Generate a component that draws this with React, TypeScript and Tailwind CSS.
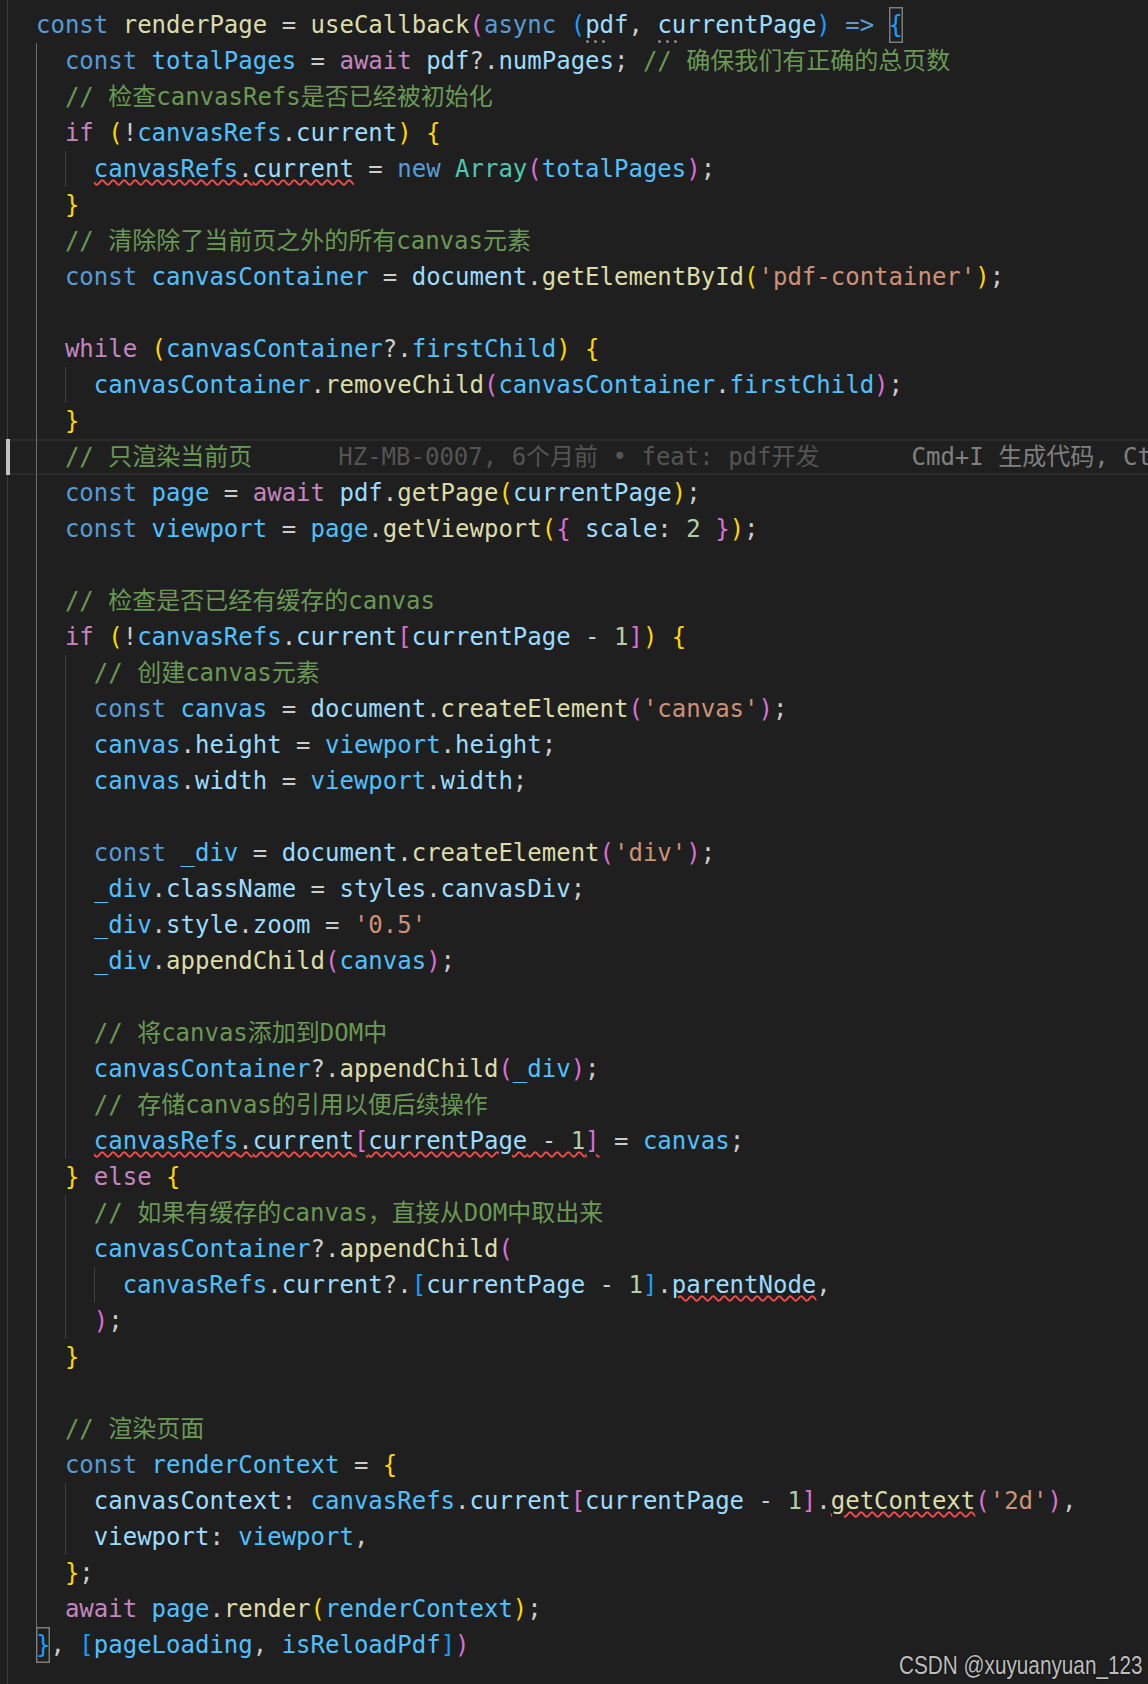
import clsx from "clsx";

type Line = { g: number; s: string; blame?: boolean };

// one letter per token colour, flags: ~ squiggle, . hint dots, # bracket box
const colors: Record<string, string> = {
  k: "text-[#569cd6]",
  c: "text-[#c586c0]",
  f: "text-[#dcdcaa]",
  v: "text-[#9cdcfe]",
  C: "text-[#4fc1ff]",
  t: "text-[#4ec9b0]",
  s: "text-[#ce9178]",
  n: "text-[#b5cea8]",
  m: "text-[#6a9955]",
  p: "text-[#cccccc]",
  y: "text-[#ffd700]",
  o: "text-[#da70d6]",
  e: "text-[#179fff]",
};

const lines: Line[] = [
  { g: 0, s: "k:const|p: |f:renderPage|p: = |f:useCallback|o:(|k:async|p: |e:(|v.:pdf|p:, |v.:currentPage|e:)|p: |k:=>|p: |e#:{" },
  { g: 1, s: "k:const|p: |C:totalPages|p: = |c:await|p: |v:pdf|p:?.|v:numPages|p:; |m:// 确保我们有正确的总页数" },
  { g: 1, s: "m:// 检查canvasRefs是否已经被初始化" },
  { g: 1, s: "c:if|p: |y:(|p:!|C:canvasRefs|p:.|v:current|y:)|p: |y:{" },
  { g: 2, s: "C~:canvasRefs|p~:.|v~:current|p: = |k:new|p: |t:Array|o:(|C:totalPages|o:)|p:;" },
  { g: 1, s: "y:}" },
  { g: 1, s: "m:// 清除除了当前页之外的所有canvas元素" },
  { g: 1, s: "k:const|p: |C:canvasContainer|p: = |v:document|p:.|f:getElementById|y:(|s:'pdf-container'|y:)|p:;" },
  { g: 1, s: "" },
  { g: 1, s: "c:while|p: |y:(|C:canvasContainer|p:?.|C:firstChild|y:)|p: |y:{" },
  { g: 2, s: "C:canvasContainer|p:.|f:removeChild|o:(|C:canvasContainer|p:.|C:firstChild|o:)|p:;" },
  { g: 1, s: "y:}" },
  { g: 1, s: "m:// 只渲染当前页", blame: true },
  { g: 1, s: "k:const|p: |C:page|p: = |c:await|p: |v:pdf|p:.|f:getPage|y:(|v:currentPage|y:)|p:;" },
  { g: 1, s: "k:const|p: |C:viewport|p: = |C:page|p:.|f:getViewport|y:(|o:{|p: |v:scale|p:: |n:2|p: |o:}|y:)|p:;" },
  { g: 1, s: "" },
  { g: 1, s: "m:// 检查是否已经有缓存的canvas" },
  { g: 1, s: "c:if|p: |y:(|p:!|C:canvasRefs|p:.|v:current|o:[|v:currentPage|p: - |n:1|o:]|y:)|p: |y:{" },
  { g: 2, s: "m:// 创建canvas元素" },
  { g: 2, s: "k:const|p: |C:canvas|p: = |v:document|p:.|f:createElement|o:(|s:'canvas'|o:)|p:;" },
  { g: 2, s: "C:canvas|p:.|v:height|p: = |C:viewport|p:.|v:height|p:;" },
  { g: 2, s: "C:canvas|p:.|v:width|p: = |C:viewport|p:.|v:width|p:;" },
  { g: 2, s: "" },
  { g: 2, s: "k:const|p: |C:_div|p: = |v:document|p:.|f:createElement|o:(|s:'div'|o:)|p:;" },
  { g: 2, s: "C:_div|p:.|v:className|p: = |v:styles|p:.|v:canvasDiv|p:;" },
  { g: 2, s: "C:_div|p:.|v:style|p:.|v:zoom|p: = |s:'0.5'" },
  { g: 2, s: "C:_div|p:.|f:appendChild|o:(|C:canvas|o:)|p:;" },
  { g: 2, s: "" },
  { g: 2, s: "m:// 将canvas添加到DOM中" },
  { g: 2, s: "C:canvasContainer|p:?.|f:appendChild|o:(|C:_div|o:)|p:;" },
  { g: 2, s: "m:// 存储canvas的引用以便后续操作" },
  { g: 2, s: "C~:canvasRefs|p~:.|v~:current|o~:[|v~:currentPage|p~: - |n~:1|o~:]|p: = |C:canvas|p:;" },
  { g: 1, s: "y:}|p: |c:else|p: |y:{" },
  { g: 2, s: "m:// 如果有缓存的canvas，直接从DOM中取出来" },
  { g: 2, s: "C:canvasContainer|p:?.|f:appendChild|o:(" },
  { g: 3, s: "C:canvasRefs|p:.|v:current|p:?.|e:[|v:currentPage|p: - |n:1|e:]|p:.|v~:parentNode|p:," },
  { g: 2, s: "o:)|p:;" },
  { g: 1, s: "y:}" },
  { g: 1, s: "" },
  { g: 1, s: "m:// 渲染页面" },
  { g: 1, s: "k:const|p: |C:renderContext|p: = |y:{" },
  { g: 2, s: "v:canvasContext|p:: |C:canvasRefs|p:.|v:current|o:[|v:currentPage|p: - |n:1|o:]|p:.|f~:getContext|o:(|s:'2d'|o:)|p:," },
  { g: 2, s: "v:viewport|p:: |C:viewport|p:," },
  { g: 1, s: "y:}|p:;" },
  { g: 1, s: "c:await|p: |C:page|p:.|f:render|y:(|C:renderContext|y:)|p:;" },
  { g: 0, s: "e#:}|p:, |e:[|C:pageLoading|p:, |C:isReloadPdf|e:]|o:)" },
];

const Token = ({ seg }: { seg: string }) => {
  const i = seg.indexOf(":");
  const head = seg.slice(0, i);
  const text = seg.slice(i + 1);
  const squiggle = head.includes("~");
  const dots = head.includes(".");
  const box = head.includes("#");

  return (
    <span
      className={clsx(
        colors[head[0]],
        squiggle &&
          "underline decoration-wavy decoration-[#f14c4c] decoration-[2px] underline-offset-[2px]",
        dots && "relative",
        box && "inline-block h-[36px] align-top shadow-[inset_0_0_0_1.5px_#7c7c7c]"
      )}
    >
      {text}
      {dots && (
        <span className="absolute left-[1px] top-[29px] flex gap-[5px]">
          <span className="h-[3px] w-[3px] rounded-full bg-[#8c8c8c]" />
          <span className="h-[3px] w-[3px] rounded-full bg-[#8c8c8c]" />
          <span className="h-[3px] w-[3px] rounded-full bg-[#8c8c8c]" />
        </span>
      )}
    </span>
  );
};

const CodeLine = ({ line }: { line: Line }) => {
  return (
    <div
      className={clsx(
        "relative flex h-[36px] pl-[28px] leading-[36px] whitespace-pre",
        line.blame && "shadow-[inset_0_2px_0_#2b2b2b,inset_0_-2px_0_#2b2b2b]"
      )}
    >
      {line.blame && (
        <span className="absolute left-[-2px] top-0 h-full w-[4px] bg-[#c2c2c2]" />
      )}
      {Array.from({ length: line.g }).map((_, i) => (
        <span
          key={i}
          className={clsx(
            "w-[2ch] shrink-0 border-l",
            i === 0 ? "border-[#6e6e6e]" : "border-[#404040]"
          )}
        />
      ))}
      <span className="min-w-0 overflow-hidden">
        {line.s && line.s.split("|").map((seg, i) => <Token key={i} seg={seg} />)}
        {line.blame && (
          <>
            <span className="ml-[86px] text-[#545454]">
              HZ-MB-0007, 6个月前 • feat: pdf开发
            </span>
            <span className="ml-[92px] text-[#808080]">Cmd+I 生成代码, Ct</span>
          </>
        )}
      </span>
    </div>
  );
};

const App = () => {
  return (
    <div className="relative h-[1684px] w-[1148px] overflow-hidden bg-[#1f1f1f] pl-[7px]">
      <div className="h-full border-l border-[#3c3c3c] pt-[7px] font-['DejaVu_Sans_Mono','Noto_Sans_CJK_SC',monospace] text-[24px] text-[#cccccc]">
        {lines.map((line, i) => (
          <CodeLine key={i} line={line} />
        ))}
      </div>

      <div className="absolute bottom-[6px] right-[5px] origin-right scale-x-[0.83] font-['Liberation_Sans',sans-serif] text-[25px] leading-[25px] text-[#bdbdbd] [text-shadow:0_0_2px_#000]">
        CSDN @xuyuanyuan_123
      </div>
    </div>
  );
};

export default App;
